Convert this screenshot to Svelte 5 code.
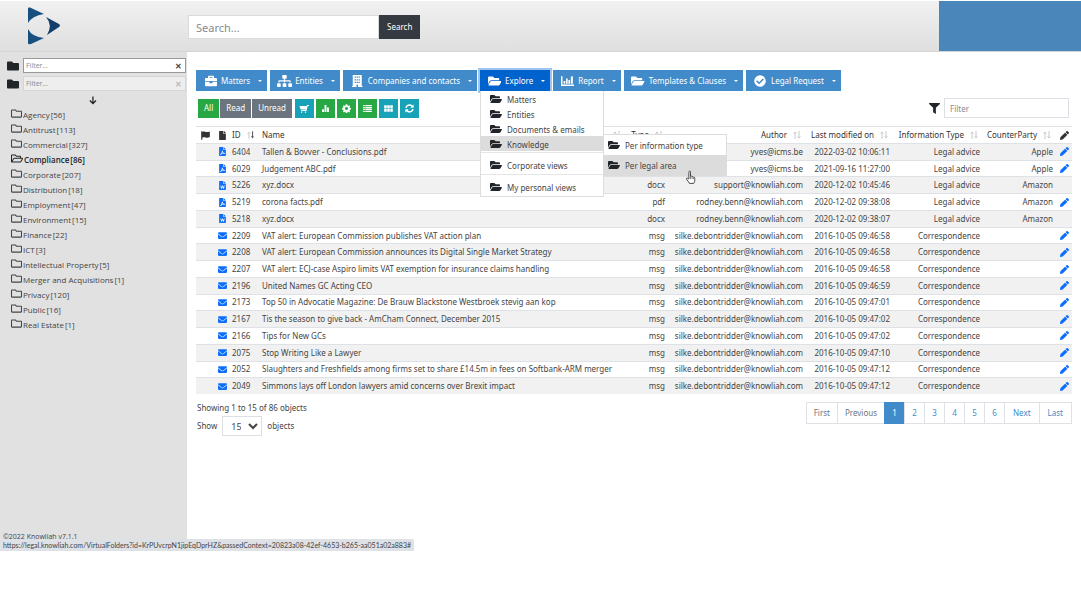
<script>
	const icons = {
		folder: { w: 512, d: 'M464 128H272l-64-64H48C21.500 64 0 85.500 0 112v288c0 26.500 21.500 48 48 48h416c26.500 0 48-21.500 48-48V176c0-26.500-21.500-48-48-48z' },
		folderLine: { w: 512, d: 'M464 128H272l-54.600-54.600c-6-6-14.100-9.400-22.600-9.400H48C21.500 64 0 85.500 0 112v288c0 26.500 21.500 48 48 48h416c26.500 0 48-21.500 48-48V176c0-26.500-21.500-48-48-48zm0 272H48V112h140l54.600 54.600c6 6 14.100 9.400 22.600 9.400H464v224z' },
		folderOpenLine: { w: 576, d: 'M527.900 224H480v-48c0-26.500-21.500-48-48-48H272l-64-64H48C21.500 64 0 85.500 0 112v288c0 26.500 21.500 48 48 48h400c16.500 0 31.900-8.500 40.700-22.600l79.900-128c20-31.900-3-73.400-40.700-73.400zM48 118c0-3.300 2.700-6 6-6h134.100l64 64H426c3.300 0 6 2.700 6 6v42H152c-16.800 0-32.400 8.800-41.100 23.200L48 351.400zm400 282H72l77.200-128H528z' },
		folderOpen: { w: 576, d: 'M572.700 292.100L500.300 416.200A64 64 0 0 1 445 448H45c-18.500 0-30-20-20.700-36l72.400-124.200A64 64 0 0 1 152 256h400c18.500 0 30 20 20.700 36.100zM152 224h328v-48c0-26.500-21.500-48-48-48H272l-64-64H48C21.500 64 0 85.500 0 112v278l69-118.400C86.200 242.200 118 224 152 224z' },
		pencil: { w: 512, d: 'M497.900 142.100l-46.100 46.100c-4.700 4.700-12.300 4.700-17 0l-111-111c-4.700-4.700-4.700-12.300 0-17l46.100-46.100c18.700-18.700 49.100-18.700 67.900 0l60.100 60.100c18.800 18.700 18.800 49.100 0 67.900zM284.200 99.800L21.600 362.400.4 483.900c-2.900 16.400 11.400 30.600 27.800 27.800l121.500-21.300 262.600-262.600c4.700-4.700 4.700-12.300 0-17l-111-111c-4.800-4.700-12.400-4.700-17.100 0z' },
		briefcase: { w: 512, d: 'M320 336c0 9-7 16-16 16h-96c-9 0-16-7-16-16v-48H0v144c0 26 22 48 48 48h416c26 0 48-22 48-48V288H320zM464 128h-80V80c0-26-22-48-48-48H176c-26 0-48 22-48 48v48H48c-26 0-48 22-48 48v80h512v-80c0-26-22-48-48-48zm-144 0H192V96h128z' },
		sitemap: { w: 640, d: 'M128 352H32c-18 0-32 14-32 32v96c0 18 14 32 32 32h96c18 0 32-14 32-32v-96c0-18-14-32-32-32zm-24-80h192v48h48v-48h192v48h48v-57c0-22-17-39-39-39H344v-64h40c18 0 32-14 32-32V32c0-18-14-32-32-32H256c-18 0-32 14-32 32v96c0 18 14 32 32 32h40v64H95c-22 0-39 17-39 39v57h48zm264 80h-96c-18 0-32 14-32 32v96c0 18 14 32 32 32h96c18 0 32-14 32-32v-96c0-18-14-32-32-32zm240 0h-96c-18 0-32 14-32 32v96c0 18 14 32 32 32h96c18 0 32-14 32-32v-96c0-18-14-32-32-32z' },
		building: { w: 448, d: 'M32 0h384v464h32v48H256v-96h-64v96H0v-48h32zM112 64v56h56V64zm84 0v56h56V64zm84 0v56h56V64zM112 176v56h56v-56zm84 0v56h56v-56zm84 0v56h56v-56zM112 288v56h56v-56zm84 0v56h56v-56zm84 0v56h56v-56z' },
		chart: { w: 576, d: 'M0 48h64v352h512v64H0zM112 256h70v112h-70zM214 144h70v224h-70zM316 208h70v160h-70zM418 96h22v-40h66v312h-88z' },
		check: { w: 512, d: 'M504 256a248 248 0 1 1-496 0 248 248 0 0 1 496 0zM227 387l184-184c7-7 7-17 0-23l-22-23c-6-6-17-6-23 0L216 308l-70-70c-6-6-17-6-23 0l-22 22c-7 7-7 17 0 23l104 104c6 6 16 6 22 0z' },
		cart: { w: 576, d: 'M570 50H450l-14 60H30l60 200h300l-8 36H130v54h296l66-290h78zM150 420a38 38 0 1 0 1 0zM370 420a38 38 0 1 0 1 0z' },
		bars: { w: 512, d: 'M60 300h110v150H60zM200 60h110v390H200zM340 200h110v250H340z' },
		gear: { w: 512, d: 'M215 20h82l12 62 42 18 54-34 56 58-34 52 18 44 62 12v80l-62 14-18 42 34 54-56 58-54-36-42 18-12 62h-82l-12-62-44-18-52 36-58-58 36-54-18-42-62-14v-80l62-12 18-44-36-52 58-58 52 34 44-18zM256 165a91 91 0 1 0 1 0z' },
		list: { w: 512, d: 'M10 60h90v70H10zM130 60h372v70H130zM10 168h90v70H10zM130 168h372v70H130zM10 276h90v70H10zM130 276h372v70H130zM10 384h90v70H10zM130 384h372v70H130z' },
		grid: { w: 512, d: 'M10 70h145v170H10zM183 70h145v170H183zM356 70h145v170H356zM10 270h145v170H10zM183 270h145v170H183zM356 270h145v170H356z' },
		refresh: { w: 512, d: 'M20 225C35 100 140 20 256 20c65 0 125 26 170 68l66-60v190H300l70-68c-30-30-70-46-114-46-76 0-138 50-155 121zM492 287C477 412 372 492 256 492c-65 0-125-26-170-68l-66 60V294h192l-70 68c30 30 70 46 114 46 76 0 138-50 155-121z' },
		funnel: { w: 512, d: 'M488 0H24C3 0-8 26 7 41l185 185v206l128 80V226L505 41c15-15 4-41-17-41z' },
		flag: { w: 512, d: 'M10 10h64v40c70-30 120-24 190 0 80 26 140 10 238-24v320c-90 44-160 50-240 24-70-22-120-22-188 8v124H10z' },
		file: { w: 384, d: 'M224 136V0H24C11 0 0 11 0 24v464c0 13 11 24 24 24h336c13 0 24-11 24-24V160H248c-13 0-24-11-24-24zm160-14v6H256V0h6c6 0 12 3 17 7l98 98c4 4 7 10 7 17z' },
		pdf: { w: 384, d: 'M224 136V0H24C11 0 0 11 0 24v464c0 13 11 24 24 24h336c13 0 24-11 24-24V160H248c-13 0-24-11-24-24zM384 128H256V0zM160 210h46c6 60 20 100 62 120l62 10v44c-60 0-90-10-120-14l-62 24c-30 50-60 70-92 64v-36c30-10 50-32 60-60 30-50 44-90 44-152zm32 92l-24 48 54-12z' },
		docx: { w: 384, d: 'M224 136V0H24C11 0 0 11 0 24v464c0 13 11 24 24 24h336c13 0 24-11 24-24V160H248c-13 0-24-11-24-24zM384 128H256V0zM70 250h44l26 110 36-110h34l36 110 26-110h44l-48 190h-42l-34-106-34 106h-40z' },
		mail: { w: 512, d: 'M502 191c4-3 10 0 10 5v204c0 26-22 48-48 48H48c-26 0-48-22-48-48V196c0-5 6-8 10-5 22 18 52 40 155 115 21 15 57 48 91 48 34 0 71-33 91-48 103-75 133-97 155-115zM256 320c23 0 57-30 74-42 133-97 143-105 173-129 6-4 9-11 9-19v-18c0-26-22-48-48-48H48C22 64 0 86 0 112v18c0 8 3 15 9 19 30 24 40 32 173 129 17 12 51 42 74 42z' },
		arrow: { w: 448, d: 'M260 32v310l112-112 52 52-200 200L24 282l52-52 112 112V32z' }
	};

	const folders = [
		['Agency', 56],
		['Antitrust', 113],
		['Commercial', 327],
		['Compliance', 86],
		['Corporate', 207],
		['Distribution', 18],
		['Employment', 47],
		['Environment', 15],
		['Finance', 22],
		['ICT', 3],
		['Intellectual Property', 5],
		['Merger and Acquisitions', 1],
		['Privacy', 120],
		['Public', 16],
		['Real Estate', 1]
	];

	const menus = [
		['Matters', 'briefcase'],
		['Entities', 'sitemap'],
		['Companies and contacts', 'building'],
		['Explore', 'folderOpen'],
		['Report', 'chart'],
		['Templates & Clauses', 'folderOpen'],
		['Legal Request', 'check']
	];

	const exploreGroups = [
		['Matters', 'Entities', 'Documents & emails', 'Knowledge'],
		['Corporate views'],
		['My personal views']
	];
	const knowledgeItems = ['Per information type', 'Per legal area'];

	const tools = [
		['cart', 'teal', 'Add to cart'],
		['bars', 'green', 'Statistics'],
		['gear', 'green', 'Settings'],
		['list', 'green', 'List'],
		['grid', 'teal', 'Grid'],
		['refresh', 'teal', 'Refresh']
	];

	const silke = 'silke.debontridder@knowliah.com';
	const rodney = 'rodney.benn@knowliah.com';
	const rows = [
		[6404, 'Tallen & Bovver - Conclusions.pdf', 'pdf', 'yves@icms.be', '2022-03-02 10:06:11', 'Legal advice', 'Apple', true],
		[6029, 'Judgement ABC.pdf', 'pdf', 'yves@icms.be', '2021-09-16 11:27:00', 'Legal advice', 'Apple', true],
		[5226, 'xyz.docx', 'docx', 'support@knowliah.com', '2020-12-02 10:45:46', 'Legal advice', 'Amazon', false],
		[5219, 'corona facts.pdf', 'pdf', rodney, '2020-12-02 09:38:08', 'Legal advice', 'Amazon', true],
		[5218, 'xyz.docx', 'docx', rodney, '2020-12-02 09:38:07', 'Legal advice', 'Amazon', false],
		[2209, 'VAT alert: European Commission publishes VAT action plan', 'msg', silke, '2016-10-05 09:46:58', 'Correspondence', '', true],
		[2208, 'VAT alert: European Commission announces its Digital Single Market Strategy', 'msg', silke, '2016-10-05 09:46:58', 'Correspondence', '', true],
		[2207, 'VAT alert: ECJ-case Aspiro limits VAT exemption for insurance claims handling', 'msg', silke, '2016-10-05 09:46:58', 'Correspondence', '', true],
		[2196, 'United Names GC Acting CEO', 'msg', silke, '2016-10-05 09:46:59', 'Correspondence', '', true],
		[2173, 'Top 50 in Advocatie Magazine: De Brauw Blackstone Westbroek stevig aan kop', 'msg', silke, '2016-10-05 09:47:01', 'Correspondence', '', true],
		[2167, 'Tis the season to give back - AmCham Connect, December 2015', 'msg', silke, '2016-10-05 09:47:02', 'Correspondence', '', true],
		[2166, 'Tips for New GCs', 'msg', silke, '2016-10-05 09:47:02', 'Correspondence', '', true],
		[2075, 'Stop Writing Like a Lawyer', 'msg', silke, '2016-10-05 09:47:10', 'Correspondence', '', true],
		[2052, 'Slaughters and Freshfields among firms set to share £14.5m in fees on Softbank-ARM merger', 'msg', silke, '2016-10-05 09:47:12', 'Correspondence', '', true],
		[2049, 'Simmons lays off London lawyers amid concerns over Brexit impact', 'msg', silke, '2016-10-05 09:47:12', 'Correspondence', '', true]
	];
	const rightColumns = ['Type', 'Author', 'Last modified on', 'Information Type', 'CounterParty'];
	const pages = ['First', 'Previous', '1', '2', '3', '4', '5', '6', 'Next', 'Last'];

	let selected = $state('Compliance');
	let openMenu = $state('Explore');
	let page = $state('1');
	let folderFilter = $state('');
	let subFilter = $state('');
</script>

{#snippet icon(name)}
	<svg class="icon {name}" viewBox="0 0 {icons[name].w} 512" aria-hidden="true">
		<path d={icons[name].d} fill="currentColor" fill-rule="evenodd" />
	</svg>
{/snippet}

{#snippet sort(down = false)}
	<svg class="sort" viewBox="0 0 8 8" aria-hidden="true">
		<path d="M2 8V1M0.500 2.500L2 1l1.500 1.500" />
		<path class:down d="M6 0v7M4.500 5.500L6 7l1.500-1.500" />
	</svg>
{/snippet}

<div class="app">
	<header>
		<a class="logo" href="#home" aria-label="Knowliah">
			<svg viewBox="0 0 34 38">
				<path d="M1 1.500Q1 0 3 .500L17 7Q5 9 1 16z" fill="#174f80" />
				<path d="M19 10L32 17Q34 18.500 32 20L20 28Q26 18 19 10z" fill="#123f6c" />
				<path d="M1 22Q5 30 17 31L4 37Q1 38 1 36z" fill="#174f80" />
			</svg>
		</a>
		<form class="search" onsubmit={(e) => e.preventDefault()}>
			<input type="text" placeholder="Search..." aria-label="Search" />
			<button>Search</button>
		</form>
		<div class="account"></div>
	</header>

	<div class="body">
		<aside>
			<div class="filter">
				{@render icon('folder')}
				<div class="field active">
					<input type="text" placeholder="Filter..." aria-label="Filter folders" bind:value={folderFilter} />
					<button aria-label="Clear folder filter" onclick={() => (folderFilter = '')}>✕</button>
				</div>
			</div>
			<div class="filter">
				{@render icon('folder')}
				<div class="field">
					<input type="text" placeholder="Filter..." aria-label="Filter subfolders" bind:value={subFilter} />
					<button aria-label="Clear subfolder filter" onclick={() => (subFilter = '')}>✕</button>
				</div>
			</div>
			<button class="expand" aria-label="Expand">{@render icon('arrow')}</button>
			<ul class="tree">
				{#each folders as [name, count]}
					<li>
						<a href="#{name}" class:selected={selected === name} onclick={() => (selected = name)}>
							{@render icon(selected === name ? 'folderOpenLine' : 'folderLine')}
							<span>{name}</span>
							<span>[{count}]</span>
						</a>
					</li>
				{/each}
			</ul>
			<div class="version">©2022 Knowliah v7.1.1</div>
		</aside>

		<main>
			<nav>
				{#each menus as [name, image]}
					<div class="menu">
						<button class="menu-button" class:open={openMenu === name} onclick={() => (openMenu = openMenu === name ? '' : name)}>
							<span class="menu-icon">{@render icon(image)}</span>
							{name}
							<span class="caret"></span>
						</button>
						{#if name === 'Explore' && openMenu === name}
							<div class="dropdown">
								{#each exploreGroups as group}
									<div class="group">
										{#each group as item}
											<a href="#{item}" class="item" class:hover={item === 'Knowledge'}>
												{@render icon('folderOpen')}<span>{item}</span>
											</a>
										{/each}
									</div>
								{/each}
								<div class="submenu">
									{#each knowledgeItems as item}
										<a href="#{item}" class="item" class:hover={item === 'Per legal area'}>
											{@render icon('folderOpen')}<span>{item}</span>
										</a>
									{/each}
									<svg class="pointer" viewBox="0 0 20 28">
										<path d="M7 15V4Q7 2 8.500 2T10 4v8Q11.500 10.500 13 12.500 14.500 11.500 15.500 13.500 18 12.500 18 15.500V19Q18 22 16 25H8Q6 21 2.500 17 2 15 4 15 5 15 7 17z" fill="#fff" stroke="#444" stroke-width="1.800" />
										<path d="M10 12v5M13 13v4M15.500 14v3" stroke="#444" stroke-width="1.200" />
									</svg>
								</div>
							</div>
						{/if}
					</div>
				{/each}
			</nav>

			<div class="toolbar">
				<button class="tool green">All</button>
				<button class="tool grey">Read</button>
				<button class="tool grey">Unread</button>
				<div class="tools">
					{#each tools as [image, color, label]}
						<button class="tool square {color}" aria-label={label}>{@render icon(image)}</button>
					{/each}
				</div>
				<label class="table-filter">
					{@render icon('funnel')}
					<input type="text" placeholder="Filter" aria-label="Filter" />
				</label>
			</div>

			<table>
				<colgroup>
					<col class="c-flag" />
					<col class="c-file" />
					<col class="c-id" />
					<col />
					<col class="c-type" />
					<col class="c-author" />
					<col class="c-date" />
					<col class="c-info" />
					<col class="c-party" />
					<col class="c-edit" />
				</colgroup>
				<thead>
					<tr>
						<th>{@render icon('flag')}</th>
						<th>{@render icon('file')}</th>
						<th><div class="head">ID {@render sort(true)}</div></th>
						<th><div class="head">Name {@render sort()}</div></th>
						{#each rightColumns as column}
							<th><div class="head right">{column} {@render sort()}</div></th>
						{/each}
						<th>{@render icon('pencil')}</th>
					</tr>
				</thead>
				<tbody>
					{#each rows as [id, name, type, author, date, info, party, editable]}
						<tr>
							<td></td>
							<td class="link">{@render icon(type === 'msg' ? 'mail' : type)}</td>
							<td>{id}</td>
							<td>{name}</td>
							<td class="right">{type}</td>
							<td class="right">{author}</td>
							<td class="right">{date}</td>
							<td class="right">{info}</td>
							<td class="right">{party}</td>
							<td class="link">{#if editable}{@render icon('pencil')}{/if}</td>
						</tr>
					{/each}
				</tbody>
			</table>

			<div class="bottom">
				<div>
					<div class="info">Showing 1 to 15 of 86 objects</div>
					<label class="length">
						Show
						<select>
							<option>15</option>
							<option>25</option>
							<option>50</option>
						</select>
						objects
					</label>
				</div>
				<div class="pagination">
					{#each pages as p, i}
						<button class:current={page === p} class:disabled={i < 2} onclick={() => (page = p)}>{p}</button>
					{/each}
				</div>
			</div>
		</main>
	</div>

	<div class="status">
		https://legal.knowliah.com/VirtualFolders?id=KrPUvcrpN1jipEqDprHZ&passedContext=20823a08-42ef-4653-b265-aa051a02a883#
	</div>
</div>

<style>
	:global(body) {
		background: #fff;
	}
	.app {
		position: relative;
		box-sizing: border-box;
		min-height: calc(100vh - 61px);
		padding-top: 1px;
		display: flex;
		flex-direction: column;
		font-family: 'Noto Sans', 'Open Sans', sans-serif;
		font-size: 8px;
		line-height: 12px;
		color: #444;
	}
	button,
	input,
	select {
		box-sizing: border-box;
		margin: 0;
		padding: 0;
		border: 0;
		border-radius: 0;
		font: inherit;
		color: inherit;
		background: none;
		outline: none;
	}
	button {
		cursor: pointer;
	}
	a {
		color: inherit;
		text-decoration: none;
	}
	input::placeholder {
		color: #868b90;
		opacity: 1;
	}
	.icon {
		display: block;
		flex: none;
		height: 9px;
	}
	.right {
		text-align: right;
	}

	header {
		display: flex;
		align-items: center;
		height: 50px;
		border-bottom: 1px solid #d4d4d4;
		background: linear-gradient(#f1f1f1, #dfdfdf);
	}
	.logo {
		width: 161px;
		padding-left: 27px;
	}
	.logo svg {
		display: block;
		width: 34px;
		height: 38px;
	}
	.search {
		display: flex;
		margin-top: 2px;
	}
	.search input {
		width: 191px;
		height: 24px;
		padding: 0 7px;
		border: 1px solid #d8dadd;
		background: #fff;
		font-size: 11px;
	}
	.search button {
		height: 24px;
		padding: 0 8px;
		background: #343a40;
		color: #fff;
	}
	.account {
		align-self: stretch;
		width: 142px;
		margin-left: auto;
		background: #4a86ba;
	}

	.body {
		flex: 1;
		display: flex;
	}
	aside {
		flex: none;
		box-sizing: border-box;
		width: 187px;
		padding: 6px 1px 9px 0;
		display: flex;
		flex-direction: column;
		background: #e1e1e1;
		font-family: 'Open Sans', 'Noto Sans', sans-serif;
	}
	.filter {
		display: flex;
		align-items: center;
		gap: 4px;
		margin-bottom: 3px;
		padding-left: 7px;
		color: #212529;
	}
	.filter .icon {
		width: 12px;
		height: 12px;
	}
	.field {
		flex: 1;
		display: flex;
		height: 15px;
		box-sizing: border-box;
		border: 1px solid #d5d5d5;
		background: #eee;
	}
	.field input {
		flex: 1;
		min-width: 0;
		padding: 0 2px;
		font-size: 7px;
	}
	.field button {
		width: 14px;
		line-height: 12px;
		font-weight: 700;
		color: #bbb;
	}
	.field.active {
		border-color: #999;
		background: #fff;
	}
	.field.active button {
		color: #444;
	}
	.expand {
		align-self: center;
		padding: 2px 0 1px;
		color: #212529;
	}
	.tree {
		list-style: none;
		margin: 0;
		padding: 0 0 0 11px;
	}
	.tree a {
		display: flex;
		align-items: center;
		gap: 1px;
		height: 15px;
		white-space: nowrap;
	}
	.tree .icon {
		width: 11px;
		height: 11px;
	}
	.tree .folderOpenLine {
		width: 12px;
	}
	.tree span {
		padding-top: 2px;
	}
	.tree .selected {
		font-weight: 600;
		color: #212529;
	}
	.version {
		margin-top: auto;
		padding-left: 3px;
		font-size: 7px;
		line-height: 10px;
	}

	main {
		flex: 1;
		min-width: 0;
		padding: 18px 9px 0;
	}
	nav {
		display: flex;
		gap: 3px;
	}
	.menu {
		position: relative;
	}
	.menu-button {
		display: flex;
		align-items: center;
		height: 21px;
		padding: 0 5px 0 8px;
		background: #428bca;
		color: #fff;
		white-space: nowrap;
	}
	.menu-button.open {
		background: #0062cc;
		box-shadow: 0 0 0 2px #9dc5f0;
	}
	.menu-icon {
		display: flex;
		justify-content: center;
		width: 13px;
		margin-right: 4px;
	}
	.menu-icon .icon {
		height: 12px;
	}
	.caret {
		margin-left: 8px;
		border: 2px solid transparent;
		border-top-color: #fff;
		border-bottom: 0;
	}
	.dropdown {
		position: absolute;
		z-index: 2;
		top: 100%;
		left: 0;
		width: 124px;
		box-sizing: border-box;
		border: 1px solid #ddd;
		border-top: 0;
		background: #fff;
	}
	.group {
		padding-bottom: 1px;
	}
	.group + .group {
		border-top: 1px solid #e5e5e5;
		padding: 3px 0 0;
	}
	.group + .group .item {
		height: 18px;
	}
	.item {
		display: flex;
		align-items: center;
		gap: 5px;
		height: 15px;
		padding-left: 9px;
	}
	.item .icon {
		width: 12px;
		height: 12px;
		color: #212529;
	}
	.item span {
		padding-top: 2px;
	}
	.hover {
		background: #dcdcdc;
	}
	.submenu {
		position: absolute;
		top: 43px;
		left: 100%;
		width: 124px;
		box-sizing: border-box;
		border: 1px solid #ddd;
		background: #fff;
	}
	.submenu .item {
		height: 20px;
		padding-left: 4px;
	}
	.pointer {
		position: absolute;
		left: 81px;
		top: 35px;
		width: 11px;
		height: 15px;
	}

	.toolbar {
		display: flex;
		align-items: center;
		gap: 1px;
		padding: 7px 3px 8px 2px;
	}
	.tool {
		height: 19px;
		padding: 0 6px;
		color: #fff;
	}
	.tools {
		display: flex;
		gap: 2px;
		margin-left: 2px;
	}
	.square {
		display: grid;
		place-items: center;
		width: 19px;
		padding: 0;
	}
	.green {
		background: #28a745;
	}
	.grey {
		background: #6c757d;
	}
	.teal {
		background: #17a2b8;
	}
	.table-filter {
		display: flex;
		align-items: center;
		gap: 4px;
		margin-left: auto;
		color: #212529;
	}
	.table-filter .icon {
		height: 11px;
	}
	.table-filter input {
		width: 125px;
		height: 20px;
		padding: 0 5px;
		border: 1px solid #dcdfe3;
	}

	table {
		width: 100%;
		height: 268px;
		table-layout: fixed;
		border-collapse: collapse;
		border-top: 1px solid #dee2e6;
		white-space: nowrap;
	}
	th,
	td {
		padding: 0 3px;
		font-weight: 400;
		text-align: left;
	}
	td.right {
		text-align: right;
	}
	th {
		height: 16px;
		color: #333;
	}
	td {
		border-top: 1px solid #dee2e6;
	}
	tbody tr:nth-child(odd) {
		background: #f1f1f1;
	}
	.c-flag {
		width: 19px;
	}
	.c-file {
		width: 14px;
	}
	.c-id {
		width: 30px;
	}
	.c-type {
		width: 42px;
	}
	.c-author {
		width: 138px;
	}
	.c-date {
		width: 87px;
	}
	.c-info {
		width: 90px;
	}
	.c-party {
		width: 73px;
	}
	.c-edit {
		width: 16px;
	}
	td .icon,
	th .icon {
		width: 9px;
		margin: 0 auto;
	}
	.link {
		color: #0d6efd;
	}
	.head {
		display: flex;
		align-items: center;
		justify-content: space-between;
		gap: 6px;
	}
	.head.right {
		justify-content: flex-end;
	}
	.sort {
		width: 8px;
		height: 8px;
		margin-right: 2px;
		fill: none;
		stroke: #c8c8c8;
	}
	.down {
		stroke: #444;
	}

	.bottom {
		display: flex;
		justify-content: space-between;
		padding: 8px 0 0 1px;
	}
	.length {
		display: flex;
		align-items: center;
		gap: 5px;
		padding-top: 2px;
	}
	.length select {
		width: 40px;
		height: 20px;
		padding: 0 4px;
		border: 1px solid #dcdfe3;
		font-size: 9px;
	}
	.pagination {
		display: flex;
	}
	.pagination button {
		min-width: 21px;
		height: 22px;
		padding: 0 7px;
		margin-left: -1px;
		border: 1px solid #dee2e6;
		color: #428bca;
	}
	.pagination button:nth-last-child(-n + 2) {
		padding: 0 8px;
	}
	.pagination .disabled {
		color: #6c757d;
	}
	.pagination .current {
		background: #428bca;
		border-color: #428bca;
		color: #fff;
	}

	.status {
		position: absolute;
		bottom: 0;
		left: 0;
		padding: 0 3px;
		border-top-right-radius: 2px;
		background: #dee1e6;
		font-family: Lato, 'Open Sans', sans-serif;
		font-size: 7px;
	}
</style>
